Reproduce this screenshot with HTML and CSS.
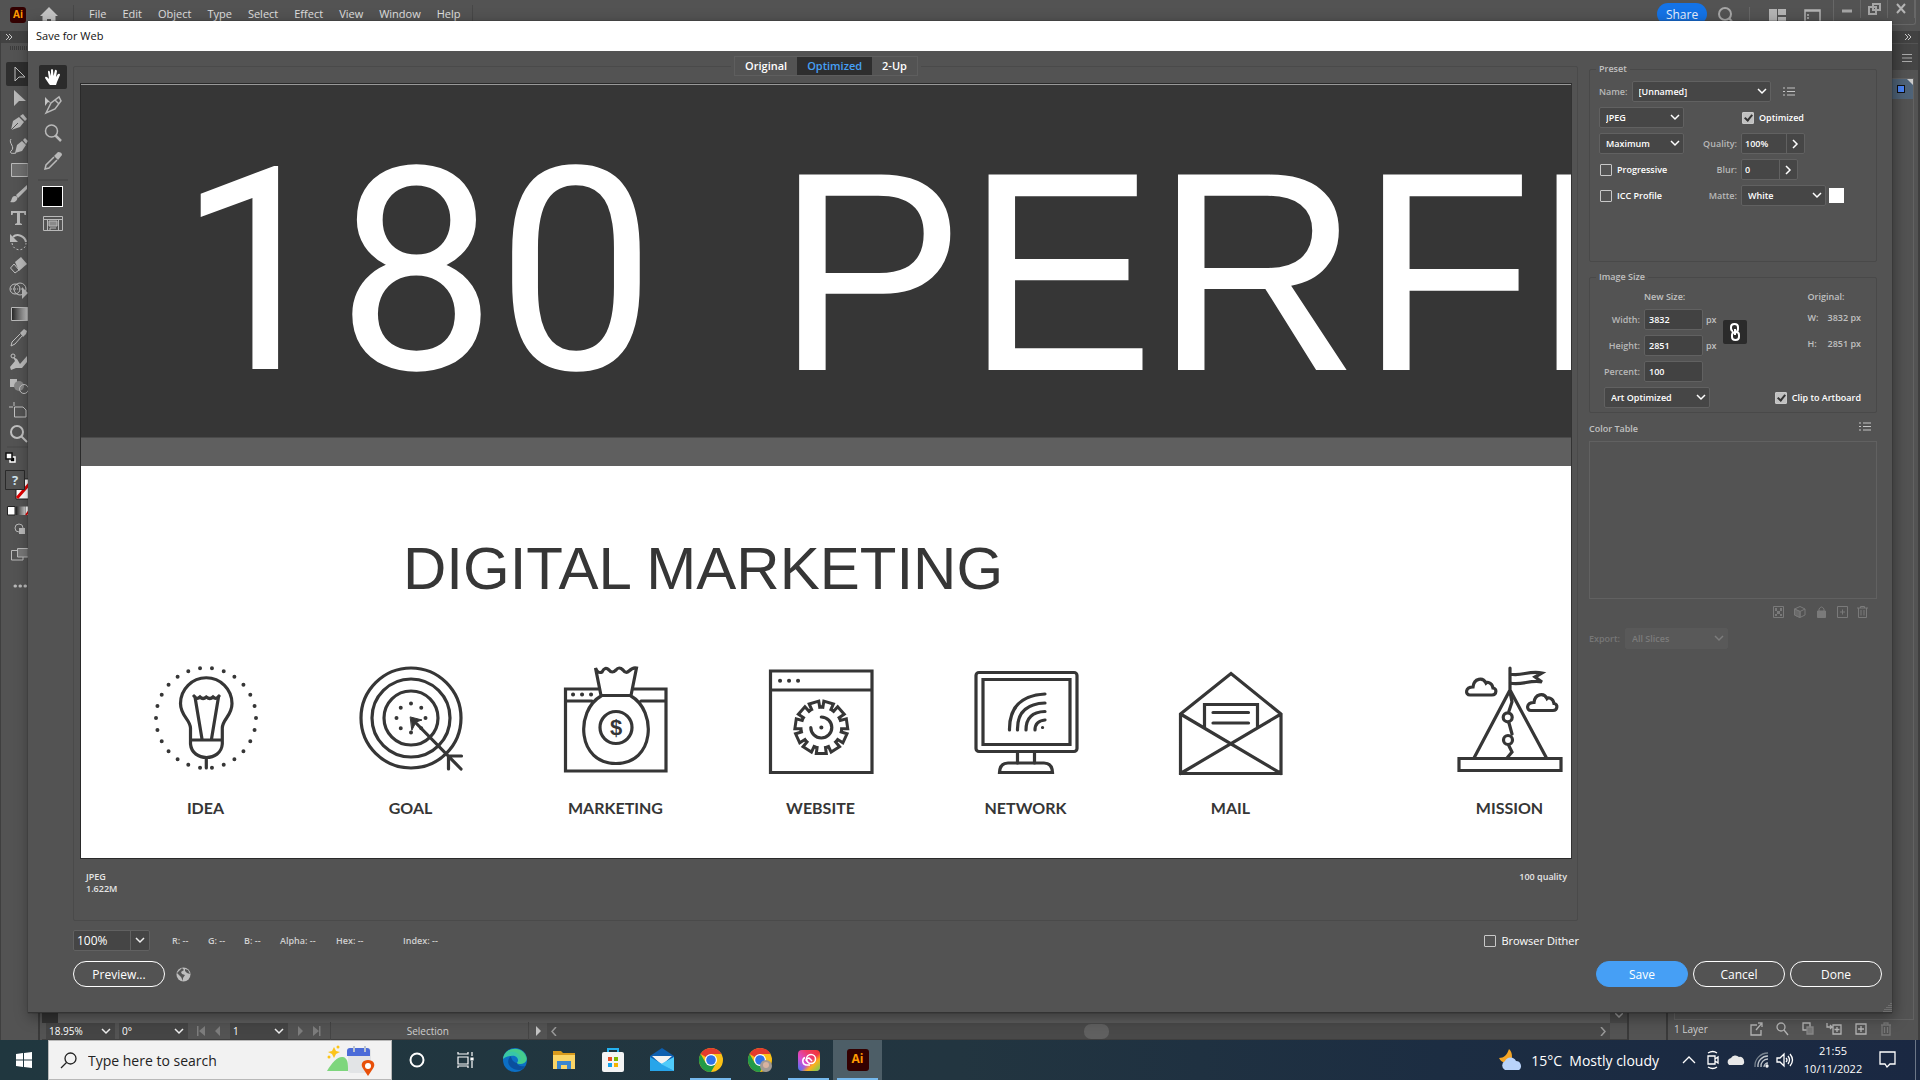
FILE: index.html
```html
<!doctype html>
<html lang="en">
  <head>
    <meta charset="UTF-8" />
    <title>Save for Web</title>
    <link rel="stylesheet" href="styles.css">
  </head>
  <body>
    <header class="menubar">
      <span class="ai-logo">Ai</span>
      <svg class="home" width="18" height="17" viewBox="0 0 18 17"><path d="M9 0L18 9H15.500V17H11V12H7V17H2.500V9H0Z" fill="#c4c4c4"/></svg>
      <nav class="menu">
        <a href="#">File</a><a href="#">Edit</a><a href="#">Object</a><a href="#">Type</a><a href="#">Select</a><a href="#">Effect</a><a href="#">View</a><a href="#">Window</a><a href="#">Help</a>
      </nav>
      <div class="menu-right">
        <button class="share">Share</button>
        <svg width="16" height="18" viewBox="0 0 16 18" fill="none" stroke="#a6a6a6" stroke-width="2"><circle cx="7" cy="7" r="6"/><path d="M11 11L16 17"/></svg>
        <i class="bar"></i>
        <svg width="18" height="14" viewBox="0 0 18 14" fill="#b4b4b4"><path d="M0 0H8V14H0ZM9 0H17V6H9ZM9 8H17V14H9Z"/></svg>
        <svg width="18" height="14" viewBox="0 0 18 14" fill="none" stroke="#b4b4b4" stroke-width="1.500"><path d="M1 14V1H16V14M1 2H16M4 5V7M4 8V10"/></svg>
        <div class="win-buttons">
          <button aria-label="Minimize"><svg width="12" height="12"><path d="M1 8H11" stroke="#a6a6a6" stroke-width="3"/></svg></button>
          <button aria-label="Restore"><svg width="13" height="12" fill="none" stroke="#a6a6a6" stroke-width="2"><path d="M5 1H12V7H5ZM1 4H8V11H1Z"/></svg></button>
          <button aria-label="Close"><svg width="12" height="12"><path d="M2 1L10 10M10 1L2 10" stroke="#b4b4b4" stroke-width="2"/></svg></button>
        </div>
      </div>
    </header>

    <main class="workspace">
      <aside class="toolpanel">
        <div class="panel-head"><svg width="8" height="6" fill="none" stroke="#c8c8c8"><path d="M1 0L4 3L1 6M4 0L7 3L4 6"/></svg></div>
        <div class="grip"></div>
        <ul class="tools">
          <li class="on"><svg viewBox="0 0 20 20"><path class="l" d="M7 3V17L11 13L17 13Z"/></svg></li>
          <li><svg viewBox="0 0 20 20"><path d="M6 2V18L11 13H18Z"/></svg></li>
          <li><svg viewBox="0 0 20 20"><path d="M3 18L5 9L11 5L16 10L12 15ZM12 4L15 2L19 7L17 9Z"/><path class="d" d="M3 18L10 11"/></svg></li>
          <li><svg viewBox="0 0 20 20"><path d="M7 17L9 9L14 5L18 9L14 15ZM15 4L17 2L20 5L18 8Z"/><path class="l" d="M3 3C0 7 8 11 3 15C1 17 4 18 8 17"/></svg></li>
          <li><svg viewBox="0 0 20 20"><path d="M3.500 3.500H20V16.500H3.500Z" fill="#6f6f6f" stroke="#b9b9b9"/></svg></li>
          <li><svg viewBox="0 0 20 20"><path d="M2 18C4 17 3 12 7 12C10 12 10 15 8 17C6 19 4 18 2 18ZM8 11L19 1V5L10 14Z"/></svg></li>
          <li><svg viewBox="0 0 20 20"><path d="M3 3H18V7H16.500L16 5H12V15L14 16V17H7V16L9 15V5H5L4.500 7H3Z"/></svg></li>
          <li><svg viewBox="0 0 20 20"><path class="l" d="M5 5C9 1 17 4 18 10" stroke-width="2"/><path d="M2 2V10H10Z"/><path class="l" d="M4 11C5 20 18 20 18 11" stroke-dasharray="2 2"/></svg></li>
          <li><svg viewBox="0 0 20 20"><path d="M7 6L13 1L19 8L11 15Z"/><path class="l" d="M6 8L2.500 12L7 17L11 14Z"/></svg></li>
          <li><svg viewBox="0 0 20 20"><circle class="l" cx="7" cy="9" r="5"/><circle class="l" cx="12" cy="9" r="6"/><path class="l" d="M3 9H14" stroke-dasharray="1 1"/><path d="M14 7V19L20 13Z"/></svg></li>
          <li><svg viewBox="0 0 20 20"><defs><linearGradient id="g"><stop stop-color="#222"/><stop offset="1" stop-color="#ccc"/></linearGradient></defs><path class="grad" d="M3.500 3.500H20V16.500H3.500Z"/></svg></li>
          <li><svg viewBox="0 0 20 20"><path d="M12 5L16 1L19 3L18 6L15 9Z"/><path class="l" d="M12 6L4 14L3 18L7 16L14 8"/></svg></li>
          <li><svg viewBox="0 0 20 20"><path d="M2 15L7 9L5 5L9 7L12 12L19 4V10L14 16H8L3 18Z"/><circle class="l" cx="5" cy="4" r="2"/></svg></li>
          <li><svg viewBox="0 0 20 20"><path d="M2 3H9V11H2Z"/><circle cx="11" cy="10" r="5" fill="#858585"/><circle class="l" cx="16" cy="13" r="4.500"/></svg></li>
          <li><svg viewBox="0 0 20 20"><path class="l" d="M1 7H5M6 2V6M6.500 7V17H18V10L15 7Z"/></svg></li>
          <li><svg viewBox="0 0 20 20"><circle class="l" cx="9" cy="8" r="6" stroke-width="2"/><path class="l" d="M13 12L19 18" stroke-width="2"/></svg></li>
        </ul>
        <div class="fill-area">
          <svg width="40" height="160" viewBox="0 0 40 160">
            <path d="M6 1H28" stroke="#484848"/>
            <path d="M9 11H14V16H9Z" fill="#000" stroke="#fff" stroke-width="1.500"/><path d="M5 7H11V13H5Z" fill="#fff" stroke="#111" stroke-width="1.500"/>
            <path d="M15 33H40V53H15Z" fill="#fff" stroke="#222"/><path d="M16 52L30 36" stroke="#e00000" stroke-width="3"/>
            <path d="M4.500 24.500H23.500V43.500H4.500Z" fill="#535353" stroke="#2a2a2a"/><text x="11" y="39">?</text>
            <path d="M6.500 60.500H14V69H6.500Z" fill="#fff" stroke="#222"/><path d="M15 60.500H24V69H15Z" fill="url(#g)"/><path d="M24.500 60.500H34V69H24.500Z" fill="#fff"/><path d="M25 69L31 61" stroke="#e00000" stroke-width="2"/>
            <circle cx="18" cy="82" r="4" fill="none" stroke="#b9b9b9"/><path d="M18 82H24V88H18Z" fill="#b9b9b9"/>
            <path d="M10.500 104.500H22V114H10.500Z" fill="none" stroke="#b9b9b9"/><path d="M16.500 102.500H32V111H16.500Z" fill="#777" stroke="#b9b9b9"/>
            <path d="M14 140H14.500M19 140H19.500M24 140H24.500" stroke="#b9b9b9" stroke-width="3" stroke-linecap="round"/>
          </svg>
        </div>
      </aside>

      <section class="document">
        <div class="artboard"><span class="ruler"></span><span class="vscroll"><svg width="8" height="5" fill="none" stroke="#999" stroke-width="1.500"><path d="M0 0L4 4L8 0"/></svg></span></div>
        <footer class="statusbar">
          <label class="combo w-zoom"><input type="text" value="18.95%" aria-label="Zoom level"><svg width="8" height="5"><path d="M0 0L4 4L8 0"/></svg></label>
          <label class="combo w-zoom"><input type="text" value="0°" aria-label="Rotate view"><svg width="8" height="5"><path d="M0 0L4 4L8 0"/></svg></label>
          <svg width="38" height="10" fill="#7d7d7d"><path d="M9 0H10.500V10H9ZM17 0V10L11 5ZM32 0V10L27 5Z"/></svg>
          <label class="combo w-page"><input type="text" value="1" aria-label="Artboard"><svg width="8" height="5"><path d="M0 0L4 4L8 0"/></svg></label>
          <svg width="42" height="10" fill="#7d7d7d"><path d="M10 0V10L15 5ZM25 0V10L31 5ZM31 0H32.500V10H31Z"/></svg>
          <span class="status-text">Selection</span>
          <svg width="18" height="10" fill="#c4c4c4"><path d="M7 0V10L12 5Z"/></svg>
          <div class="hscroll">
            <svg width="6" height="9"><path d="M5 0L1 4.500L5 9"/></svg>
            <span class="thumb"></span>
            <svg width="6" height="9"><path d="M1 0L5 4.500L1 9"/></svg>
          </div>
          <span class="corner"></span>
        </footer>
      </section>
      <div class="dock"></div>
      <aside class="layers">
        <div class="panel-head right"><svg width="8" height="6" fill="none" stroke="#c8c8c8"><path d="M1 0L4 3L1 6M4 0L7 3L4 6"/></svg></div>
        <div class="layer-tabs"><svg width="10" height="8" stroke="#aaa"><path d="M0 .5H10M0 4H10M0 7.500H10"/></svg></div>
        <div class="layer-list"><div class="layer-row"><i></i><svg width="6" height="6"><path d="M0 0H6V6Z" fill="#ccc"/></svg></div></div>
        <div class="layer-foot">
          <span>1 Layer</span>
          <svg width="150" height="14" fill="none" stroke="#b4b4b4" stroke-width="1.300">
            <path d="M7 3H1V13H11V8M6 8L12 1M8 1H12V5"/>
            <circle cx="31" cy="5" r="4"/><path d="M34 8L38 13"/>
            <path d="M53 1H60V8H53Z"/><path d="M57 5H63V12H57Z" fill="#777" stroke="#888"/>
            <path d="M77 1V5H82M80 3L82 5L80 7M83 3H91V12H83ZM87 5V10M84.500 7.500H89.500"/>
            <path d="M106 2H116V12H106ZM111 4V10M108 7H114"/>
            <path d="M131 3H141M134 3V1H138V3M132 3V13H140V3M134.500 5V11M137.500 5V11" stroke="#777"/>
          </svg>
        </div>
      </aside>
    </main>

    <!-- Windows taskbar -->
    <footer class="taskbar">
      <button class="start" aria-label="Start"><svg width="16" height="16" viewBox="0 0 16 16" fill="#fff"><path d="M0 2L7 1V7.500H0ZM8 1L16 0V7.500H8ZM0 8.500H7V15L0 14ZM8 8.500H16V16L8 15Z"/></svg></button>
      <label class="search">
        <svg width="17" height="17" viewBox="0 0 17 17" fill="none" stroke="#222" stroke-width="1.300"><circle cx="10.500" cy="6.500" r="5.500"/><path d="M6.500 10.500L1 16"/></svg>
        <input type="text" placeholder="Type here to search">
        <svg width="50" height="32" viewBox="0 0 50 32">
          <path d="M7 3L9 7L13 8L9 10L7 14L5 10L1 8L5 7Z" fill="#fcc419"/><circle cx="11" cy="3" r="1.500" fill="#fcc419"/><circle cx="2" cy="13" r="1.500" fill="#fcc419"/>
          <rect x="21" y="4" width="23" height="25" rx="3" fill="#e2e4e6"/><path d="M20 12V7Q20 4 23 4H40Q43 4 43 7V12Z" fill="#4a6bd8"/><path d="M27 2V8M38 2V8" stroke="#b9c2cf" stroke-width="2"/>
          <path d="M0 27C5 18 11 12 16 13C21 14 21 20 21 27Z" fill="#7ed67d"/>
          <path d="M41 32L37 26C32 20 36 16 41 16C46 16 50 20 45 26Z" fill="#e8500a"/><circle cx="41" cy="22" r="3" fill="#fff"/>
        </svg>
      </label>
      <div class="apps">
        <a href="#"><svg viewBox="0 0 26 26"><circle cx="13" cy="13" r="6.500" fill="none" stroke="#fff" stroke-width="2"/></svg></a>
        <a href="#"><svg viewBox="0 0 26 26" fill="none" stroke="#fff" stroke-width="1.200"><path d="M5 5V7H15V5M5 10H15V17H5ZM5 21V19H15V21M19 5V9M19 14V21"/><path d="M18 11H20V13H18Z" fill="#fff"/></svg></a>
        <a href="#"><svg viewBox="0 0 26 26"><circle cx="13" cy="13" r="12" fill="#0c6fc4"/><path d="M1 12C2 0 20-2 24 10C26 17 18 18 15 16C18 12 14 8 9 9C5 9 2 11 1 12Z" fill="#38c6a8"/><path d="M9 9C3 14 7 23 17 23C20 23 22 21 23 19C19 20 15 18 15 16C12 16 9 12 9 9Z" fill="#0a4f9e"/><path d="M2 9C6 3 14 3 18 9C20 13 17 15 15 16C17 18 24 17 25 12C24 1 8-3 2 9Z" fill="#4cd07c" opacity=".6"/></svg></a>
        <a href="#"><svg viewBox="0 0 26 26"><path d="M2 4H10L12 6H24V22H2Z" fill="#d99a1c"/><path d="M2 8H24V22H2Z" fill="#fbd566"/><path d="M6 22V14H20V22H16V18H10V22Z" fill="#3a86d0"/></svg></a>
        <a href="#"><svg viewBox="0 0 26 26"><path d="M8 6V2H18V6" fill="none" stroke="#25b2f0" stroke-width="2"/><rect x="2" y="5" width="22" height="20" rx="2" fill="#f4f4f4"/><path d="M8 10H12V14H8Z" fill="#e94f27"/><path d="M14 10H18V14H14Z" fill="#7fba00"/><path d="M8 16H12V20H8Z" fill="#13a3ef"/><path d="M14 16H18V20H14Z" fill="#f7b500"/></svg></a>
        <a href="#"><svg viewBox="0 0 26 26"><path d="M1 9L13 1L25 9V24H1Z" fill="#0d5fb0"/><path d="M3 9H23L13 18Z" fill="#f2f2f2"/><path d="M1 10L25 24H1Z" fill="#27a5ea"/><path d="M25 10L12 17L25 24Z" fill="#4fcbfa"/></svg></a>
        <a href="#" class="run"><svg viewBox="0 0 26 26"><circle cx="13" cy="13" r="12" fill="#fbc116"/><path d="M13 13L2.600 7A12 12 0 0 1 23.400 7H13Z" fill="#e33b2e"/><path d="M2.600 7A12 12 0 0 0 13 25L18.200 16L13 13L7.800 16Z" fill="#229a48"/><circle cx="13" cy="13" r="6" fill="#fff"/><circle cx="13" cy="13" r="4.800" fill="#2f72e8"/></svg></a>
        <a href="#"><svg viewBox="0 0 26 26"><circle cx="13" cy="13" r="12" fill="#fbc116"/><path d="M13 13L2.600 7A12 12 0 0 1 23.400 7H13Z" fill="#e33b2e"/><path d="M2.600 7A12 12 0 0 0 13 25L18.200 16L13 13L7.800 16Z" fill="#229a48"/><circle cx="13" cy="13" r="6" fill="#fff"/><circle cx="13" cy="13" r="4.800" fill="#2f72e8"/><circle cx="19" cy="19" r="6" fill="#a29a94"/><circle cx="19" cy="18" r="3" fill="#d9b3a0"/></svg></a>
        <a href="#" class="run"><svg viewBox="0 0 26 26"><defs><linearGradient id="cc" x1="1" x2="0" y2="1"><stop stop-color="#f0362b"/><stop offset=".35" stop-color="#ee3a6a"/><stop offset=".65" stop-color="#d94bd0"/><stop offset="1" stop-color="#3b7cf5"/></linearGradient><linearGradient id="cc2" x1="0" x2="1" y2="1"><stop offset=".55" stop-color="#fa0" stop-opacity="0"/><stop offset=".7" stop-color="#ffb01c"/><stop offset="1" stop-color="#5fd35a"/></linearGradient></defs><rect x="2" y="3" width="22" height="21" rx="4" fill="url(#cc)"/><rect x="2" y="3" width="22" height="21" rx="4" fill="url(#cc2)"/><circle cx="15" cy="12" r="4.500" fill="none" stroke="#fff" stroke-width="1.500"/><path d="M14 18H10A4 4 0 0 1 9 10.500M12 15L10 13A3 3 0 0 1 13 11L16 14" fill="none" stroke="#fff" stroke-width="1.500"/></svg></a>
        <a href="#" class="run active"><span class="ai-logo big">Ai</span></a>
      </div>
      <div class="tray">
        <svg width="24" height="22" viewBox="0 0 24 22"><path d="M10 0C8 6 5 9 0 9C3 16 13 14 13 8C13 4 12 2 10 0Z" fill="#f5a524"/><path d="M6 21A5 5 0 0 1 6 12A6 6 0 0 1 17 12A5 5 0 0 1 20 21Z" fill="#b9d3fa"/></svg>
        <span class="weather">15°C&nbsp; Mostly cloudy</span>
        <svg width="112" height="20" viewBox="0 0 112 20" fill="none" stroke="#fff" stroke-width="1.300">
          <path d="M1 13L7 7L13 13"/>
          <path d="M26 6H33V14H26ZM33 9L36 7V13L33 11M26 3Q31 0 35 3M26 17Q31 20 35 17"/>
          <path d="M47 15A4 4 0 0 1 49 8A5 5 0 0 1 57 7A4 4 0 0 1 62 11A3 3 0 0 1 60 15Z" fill="#e8e8e8" stroke="none"/>
          <path d="M76 17A10 10 0 0 1 86 6M79 17A7 7 0 0 1 86 9M82 17A4 4 0 0 1 86 13" stroke="#c0c6cc"/><path d="M73 17A13 13 0 0 1 86 3" stroke="#78838f"/><circle cx="85" cy="16" r="1"/>
          <path d="M95 8H98L102 4V16L98 12H95ZM104 8Q106 10 104 12M106 6Q109 10 106 14M108 4Q113 10 108 16"/>
        </svg>
        <div class="clock"><span>21:55</span><span>10/11/2022</span></div>
        <svg width="17" height="18" fill="none" stroke="#fff" stroke-width="1.300"><path d="M1 1H16V13H11L8 16L6 13H1Z"/></svg>
        <i class="peek"></i>
      </div>
    </footer>

    <!-- Save for Web window -->
    <section class="dialog">
      <h1 class="dialog-title">Save for Web</h1>
      <div class="dialog-main">
        <div class="dialog-tools">
          <button class="on" aria-label="Hand"><svg viewBox="0 0 20 20" fill="#fff"><path d="M6 17L2 11Q2 9 4 10L6 12L5 5Q5 3 6.500 4L8 9L8 3Q9 1 10 3L10.500 9L12 3Q13 2 14 4L13 10L15 7Q17 6 17 8L14 15L13 18H7Z"/></svg></button>
          <button aria-label="Slice select"><svg viewBox="0 0 20 20"><path d="M2 2L8 8L5 7L2 11Z" fill="#c4c4c4"/><path d="M3 18L8 8L16 2L18 6L12 14ZM12 5L16 9" fill="none" stroke="#b9b9b9" stroke-width="1.500"/></svg></button>
          <button aria-label="Zoom"><svg viewBox="0 0 20 20" fill="none" stroke="#b9b9b9"><circle cx="8.500" cy="8" r="6" stroke-width="1.500"/><path d="M12.500 12.500L18 18" stroke-width="2.500"/></svg></button>
          <button aria-label="Eyedropper"><svg viewBox="0 0 20 20"><path d="M11 5L15 1Q19 1 19 4L15 9Z" fill="#b9b9b9"/><path d="M11 6L3 14L2 18L6 17L14 9" fill="none" stroke="#b9b9b9" stroke-width="1.500"/></svg></button>
          <hr>
          <button class="swatch" aria-label="Eyedropper color"></button>
          <button aria-label="Slices visibility"><svg viewBox="0 0 20 20" fill="none" stroke="#b9b9b9"><path d="M.5 3.500H19.500V17.500H.5ZM.5 6.500H19.500M4.500 7V17M15.500 7V17"/><path d="M6 8H14V13H6Z" fill="#8a8a8a"/><path d="M7 17V15H13"/></svg></button>
        </div>

        <div class="preview">
          <div class="tabs">
            <button>Original</button><button class="current">Optimized</button><button>2-Up</button>
          </div>
          <div class="canvas">
            <div class="hero"><span class="num">180</span><span>PERFE</span></div>
            <div class="strip"></div>
            <div class="sheet">
              <h2>DIGITAL MARKETING</h2>
              <div class="icons">
                <figure>
                  <svg viewBox="0 0 110 116">
                    <circle cx="55" cy="58" r="50" pathLength="26" stroke-dasharray="0 1" stroke-width="4"/>
                    <path d="M39.500 80V68C39 59 29.500 56 29.500 43.500A25.600 25.600 0 0 1 81 43.500C81 56 71.500 59 71.300 68V80ZM39.500 80V84C41 102 70 102 71.300 84V80M55.300 98V108M51 79L44 37M60.500 79L67.500 37M43 36Q46 40 49 37Q52 40 55.300 37Q59 40 62 37Q65 40 68 36"/>
                  </svg>
                  <figcaption>IDEA</figcaption>
                </figure>
                <figure>
                  <svg viewBox="0 0 110 116">
                    <circle cx="55" cy="58" r="50"/><circle cx="55" cy="58" r="39"/><circle cx="55" cy="58" r="27"/>
                    <circle cx="55" cy="58" r="14.500" pathLength="8" stroke-dasharray="0 1" stroke-width="4"/>
                    <path d="M57 60L105 109M92.500 109V96H105.500"/><path class="solid" d="M54.500 57L66 60L60 62L56 70Z"/>
                  </svg>
                  <figcaption>GOAL</figcaption>
                </figure>
                <figure>
                  <svg viewBox="0 0 110 116">
                    <path d="M38 29H4.500V111H105V29H72M4.500 41H31M80 41H105M40 35.500L34.500 8Q37 14 41 12Q44 6 48 10Q51 14 55 10Q58 6 62 10Q65 14 68 11Q72 7 75.500 8L70 35.500ZM40 36C14 51 16 103.500 55 103.500C94 103.500 96 51 70 36"/>
                    <circle cx="55" cy="67.500" r="16"/>
                    <path d="M12 34.500H12.100M21 34.500H21.100M30 34.500H30.100" stroke-width="4"/>
                    <text x="55" y="75">$</text>
                  </svg>
                  <figcaption>MARKETING</figcaption>
                </figure>
                <figure>
                  <svg viewBox="0 0 110 116">
                    <path d="M4.500 11H106V112.500H4.500ZM4.500 30H106"/>
                    <path d="M14 20.700H14.100M23 20.700H23.100M32 20.700H32.100M55.300 67.500H55.400" stroke-width="4"/>
                    <defs><path id="tooth" d="M-5.770-19.660L-4.200-19.900L-5-26H5L4.200-19.900L5.770-19.660"/></defs>
                    <g class="gear" transform="translate(55.300 67.500) rotate(180)">
                      <use href="#tooth"/><use href="#tooth" transform="rotate(32.730)"/><use href="#tooth" transform="rotate(65.450)"/><use href="#tooth" transform="rotate(98.180)"/><use href="#tooth" transform="rotate(130.910)"/><use href="#tooth" transform="rotate(163.640)"/><use href="#tooth" transform="rotate(196.360)"/><use href="#tooth" transform="rotate(229.090)"/><use href="#tooth" transform="rotate(261.820)"/><use href="#tooth" transform="rotate(294.550)"/><use href="#tooth" transform="rotate(327.270)"/>
                    </g>
                    <path d="M55.300 57A10.500 10.500 0 1 1 44.800 67.500"/>
                  </svg>
                  <figcaption>WEBSITE</figcaption>
                </figure>
                <figure>
                  <svg viewBox="0 0 110 116">
                    <rect x="5" y="12.500" width="101" height="79" rx="3"/><path d="M12 19.500H99V84.500H12ZM46.500 92V103M63.500 92V103"/>
                    <path d="M28.500 112.500H81.500Q81 103 73 103H37Q29 103 28.500 112.500Z"/>
                    <path d="M74 34Q38 36 38.500 70M74 43Q46 44 46.500 70M74 51.500Q55 52 55 70M74 60Q64 61 64 70M71.500 67.500H71.600"/>
                  </svg>
                  <figcaption>NETWORK</figcaption>
                </figure>
                <figure>
                  <svg viewBox="0 0 110 116">
                    <path d="M4.500 54L55 13.500L105 54V113.500H4.500ZM4.500 54L105 113.500M105 54L4.500 113.500M28.500 67V44.500H81.500V67M37 52.500H72.500M37 63H72.500"/>
                  </svg>
                  <figcaption>MAIL</figcaption>
                </figure>
                <figure class="far">
                  <svg viewBox="0 0 110 116">
                    <path d="M4 98.500H106V110.500H4ZM19 98L55 30L91.500 98M55 8V30M55 14C66 17 74 10 87 13L80 17L87 22C76 19 66 26 55 23M55 32L57 42L54 51M54 63L57 74M54 86L57 92L52 98"/>
                    <circle cx="52.700" cy="57.300" r="4.500"/><circle cx="53" cy="80" r="4.500"/>
                    <path d="M15 35H37C42 35 42 28 38 28C37 22 32 22 31 23C28 17 19 18 18 27C10 27 10 35 15 35Z"/>
                    <path d="M76 50.500H98C103 50.500 103 43.500 99 43.500C98 37.500 93 37.500 92 38.500C89 32.500 80 33.500 79 42.500C71 42.500 71 50.500 76 50.500Z"/>
                  </svg>
                  <figcaption>MISSION</figcaption>
                </figure>
              </div>
            </div>
          </div>
          <div class="preview-info"><span>JPEG<br>1.622M</span><span>100 quality</span></div>
        </div>

        <div class="settings">
          <fieldset class="preset">
            <legend>Preset</legend>
            <div class="row">
              <label for="name">Name:</label>
              <span class="select w-name"><select id="name"><option>[Unnamed]</option></select><svg width="8" height="5"><path d="M0 0L4 4L8 0"/></svg></span>
              <svg class="list-icon" width="12" height="9" stroke="#c4c4c4"><path d="M0 1H2M4 1H12M0 4.500H2M4 4.500H12M0 8H2M4 8H12"/></svg>
            </div>
            <div class="row">
              <span class="select w-half"><select aria-label="Format"><option>JPEG</option></select><svg width="8" height="5"><path d="M0 0L4 4L8 0"/></svg></span>
              <span class="lab"></span>
              <label class="check"><input type="checkbox" checked>Optimized</label>
            </div>
            <div class="row">
              <span class="select w-half"><select aria-label="Compression"><option>Maximum</option></select><svg width="8" height="5"><path d="M0 0L4 4L8 0"/></svg></span>
              <label class="lab" for="quality">Quality:</label>
              <span class="spin"><input class="w-45" id="quality" type="text" value="100%"><button aria-label="Quality slider"><svg width="5" height="8"><path d="M0 0L4 4L0 8"/></svg></button></span>
            </div>
            <div class="row">
              <label class="check w-half"><input type="checkbox">Progressive</label>
              <label class="lab" for="blur">Blur:</label>
              <span class="spin"><input class="w-38" id="blur" type="text" value="0"><button aria-label="Blur slider"><svg width="5" height="8"><path d="M0 0L4 4L0 8"/></svg></button></span>
            </div>
            <div class="row">
              <label class="check w-half"><input type="checkbox">ICC Profile</label>
              <label class="lab" for="matte">Matte:</label>
              <span class="select w-half"><select id="matte"><option>White</option></select><svg width="8" height="5"><path d="M0 0L4 4L8 0"/></svg></span>
              <button class="matte-color" aria-label="Matte color"></button>
            </div>
          </fieldset>

          <fieldset class="image-size">
            <legend>Image Size</legend>
            <div class="dims">
              <div class="dim-fields">
                <div class="dim-head">New Size:</div>
                <div class="row"><label for="w">Width:</label><input id="w" type="text" value="3832">px</div>
                <div class="row"><label for="h">Height:</label><input id="h" type="text" value="2851">px</div>
                <div class="row"><label for="p">Percent:</label><input id="p" type="text" value="100"></div>
              </div>
              <button class="link" aria-label="Constrain proportions"><svg width="10" height="18" viewBox="0 0 10 18" fill="none" stroke="#fff" stroke-width="2"><path d="M3 8Q1 8 1 5V4Q1 1 4.500 1Q8 1 8 4V6Q8 9 5 9M6 9Q9 9 9 12V14Q9 17 5.500 17Q2 17 2 14V12Q2 10 4 9M5 6V12"/></svg></button>
              <div class="orig">
                <div>Original:</div>
                <div><span>W:</span>3832 px</div>
                <div><span>H:</span>2851 px</div>
              </div>
            </div>
            <div class="row resample">
              <span class="select w-art"><select aria-label="Resampling"><option>Art Optimized</option></select><svg width="8" height="5"><path d="M0 0L4 4L8 0"/></svg></span>
              <label class="check"><input type="checkbox" checked>Clip to Artboard</label>
            </div>
          </fieldset>

          <div class="table-head"><span>Color Table</span><svg width="12" height="9" stroke="#c4c4c4"><path d="M0 1H2M4 1H12M0 4.500H2M4 4.500H12M0 8H2M4 8H12"/></svg></div>
          <div class="color-table"></div>
          <svg class="table-tools" width="96" height="12" viewBox="0 0 96 12" fill="none" stroke="#7a7a7a">
            <path d="M.5.5H10.500V11.500H.5Z"/><path d="M2 2H4V5H2ZM7 2H9V5H7ZM4 5H7V8H4ZM2 8H4V10H2ZM7 8H9V10H7Z" fill="#7a7a7a" stroke="none"/>
            <path d="M27 .5L32 3V9L27 11.500L21.500 9V3ZM21.500 3L27 5.500L32 3M27 5.500V11.500"/><path d="M21.500 3L27 5.500V11.500L21.500 9Z" fill="#6a6a6a"/>
            <path d="M46 5V3Q48.500-1 51 3V5"/><path d="M44.500 5H52.500V11.500H44.500Z" fill="#7a7a7a"/>
            <path d="M64.500.5H74.500V11.500H64.500ZM69.500 3.500V8.500M67 6H72"/>
            <path d="M84 2H95M87.500 2V.5H91.500V2M85.500 2V11.500H93.500V2M88 4V9.500M91 4V9.500"/>
          </svg>
          <div class="export">
            <label for="export">Export:</label>
            <span class="select w-export off"><select id="export" disabled><option>All Slices</option></select><svg width="8" height="5"><path d="M0 0L4 4L8 0"/></svg></span>
          </div>
        </div>
      </div>

      <div class="info-row">
        <label class="combo zoom"><input type="text" value="100%" aria-label="Zoom"><svg width="8" height="5"><path d="M0 0L4 4L8 0"/></svg></label>
        <div class="readout"><span>R: --</span><span>G: --</span><span>B: --</span><span class="wide">Alpha: --</span><span class="wider">Hex: --</span><span>Index: --</span></div>
        <label class="check dither"><input type="checkbox">Browser Dither</label>
      </div>
      <div class="button-row">
        <button class="pill">Preview...</button>
        <svg class="globe" width="15" height="15" viewBox="0 0 15 15"><circle cx="7.500" cy="7.500" r="7" fill="#bdbdbd"/><path d="M6 1L8 3L5 5L6 7L9 8L7 11V14L5 10L3 8L1 6L3 4ZM9 2L12 3L14 7L11 6L9 4Z" fill="#555"/></svg>
        <span class="spacer"></span>
        <button class="pill save">Save</button>
        <button class="pill">Cancel</button>
        <button class="pill">Done</button>
      </div>
      <svg class="resize" width="9" height="9"><path d="M8 0V9M6 2V9M4 4V9M2 6V9M0 8V9" stroke="#8a8a8a" stroke-dasharray="1 1"/></svg>
    </section>
  </body>
</html>
```
FILE: styles.css
```css
* {
  box-sizing: border-box;
}
body {
  margin: 0;
  height: 100vh;
  display: flex;
  flex-direction: column;
  position: relative;
  overflow: hidden;
  background-color: #535353;
  color: #d0d0d0;
  font-family: 'Open Sans', 'Noto Sans', sans-serif;
  font-size: 12px;
}
button,
input,
select {
  font: inherit;
  color: inherit;
  margin: 0;
  padding: 0;
  border: none;
  background: none;
  border-radius: 0;
  min-width: 0;
}
svg {
  display: block;
  flex: none;
}
a {
  color: inherit;
  text-decoration: none;
}

/* menu bar */
.menubar {
  height: 31px;
  display: flex;
  align-items: flex-start;
  padding: 7px 4px 0 10px;
}
.ai-logo {
  width: 16px;
  height: 16px;
  border-radius: 3px;
  background-color: #330000;
  color: #ff9a00;
  font-size: 10px;
  font-weight: bold;
  line-height: 15px;
  text-align: center;
}
.home {
  margin-left: 14px;
}
.menu {
  display: flex;
  gap: 16px;
  margin: -2px 0 0 15px;
  padding: 0 11px 0 15px;
  border-left: 1px solid #474747;
  border-right: 1px solid #474747;
  font-size: 11px;
  line-height: 18px;
  color: #e0e0e0;
}
.menu-right {
  margin-left: auto;
  display: flex;
  gap: 11px;
}
.share {
  width: 50px;
  height: 22px;
  margin-top: -4px;
  border-radius: 11px;
  background-color: #1473e6;
  color: #e8f1ff;
  font-size: 12px;
  line-height: 24px;
}
.bar {
  width: 1px;
  height: 16px;
  margin: 0 8px 0 4px;
  background-color: #666;
}
.menu-right > svg {
  margin-top: 2px;
}
.menu-right > svg:first-of-type {
  margin-top: 0;
}
.menu-right > .bar + svg {
  margin-right: 6px;
}
.win-buttons {
  display: flex;
  margin-top: -7px;
  border: 1px solid #676767;
  border-top: none;
  border-radius: 0 0 3px 3px;
}
.win-buttons button {
  width: 27px;
  height: 18px;
  display: flex;
  align-items: center;
  justify-content: center;
  border-right: 1px solid #676767;
}

/* background workspace */
.workspace {
  flex: 1;
  display: flex;
  min-height: 0;
}
.toolpanel {
  width: 40px;
  border-right: 2px solid #3a3a3a;
  border-left: 1px solid #3f3f3f;
  overflow: hidden;
}
.panel-head {
  height: 12px;
  padding: 3px 0 0 4px;
  background-color: #424242;
}
.panel-head.right {
  display: flex;
  justify-content: flex-end;
  padding-right: 6px;
}
.grip {
  width: 26px;
  height: 4px;
  margin: 3px 0 12px 9px;
  background: repeating-linear-gradient(90deg, #3c3c3c 0 1px, #535353 1px 2px);
}
.tools {
  list-style: none;
  margin: 0;
  padding: 0 0 0 5px;
}
.tools li {
  height: 24px;
  padding: 2px;
}
.tools .on {
  background-color: #2e2e2e;
  border-radius: 2px;
}
.tools svg {
  width: 20px;
  height: 20px;
  fill: #b9b9b9;
}
.tools .l {
  fill: none;
  stroke: #c0c0c0;
}
.tools .d {
  stroke: #535353;
}
.tools .grad {
  fill: url(#g);
  stroke: #b9b9b9;
}
.fill-area text {
  fill: #cfe3ee;
  font-size: 13px;
  font-weight: bold;
}
.document {
  flex: 1;
  display: flex;
  flex-direction: column;
  min-width: 0;
  padding-left: 2px;
}
.artboard {
  flex: 1;
  display: flex;
  justify-content: space-between;
  background-color: #5c5c5c;
}
.ruler {
  width: 16px;
  background-color: #333;
}
.vscroll {
  width: 17px;
  display: flex;
  align-items: flex-end;
  justify-content: center;
  padding-bottom: 5px;
  background-color: #494949;
}
.statusbar {
  height: 17px;
  display: flex;
  align-items: center;
  border-bottom: 1px solid #3f3f3f;
  font-size: 10px;
  line-height: 18px;
}
.statusbar .combo {
  height: 16px;
  margin-left: 4px;
}
.combo {
  display: flex;
  align-items: center;
  color: #fff;
  background-color: #454545;
}
.combo input {
  flex: 1;
  width: 100%;
  padding-left: 3px;
}
.combo svg {
  width: 8px;
  margin: 0 5px;
  fill: none;
  stroke: #eee;
  stroke-width: 1.5;
  overflow: visible;
}
.w-zoom {
  width: 69px;
}
.w-page {
  width: 58px;
}
.status-text {
  width: 199px;
  padding-right: 79px;
  text-align: right;
  border-left: 1px solid #454545;
  border-right: 1px solid #454545;
}
.hscroll {
  flex: 1;
  display: flex;
  align-items: center;
  justify-content: space-between;
  height: 16px;
  padding: 0 4px;
  background-color: #494949;
}
.hscroll svg {
  fill: none;
  stroke: #999;
  stroke-width: 1.5;
}
.thumb {
  width: 25px;
  height: 15px;
  margin-left: 36px;
  border-radius: 7px;
  background-color: #606060;
}
.corner {
  width: 17px;
}
.dock {
  width: 41px;
  border-left: 2px solid #3a3a3a;
  border-right: 2px solid #3a3a3a;
}
.layers {
  width: 252px;
  display: flex;
  flex-direction: column;
  border-right: 2px solid #3f3f3f;
}
.layer-tabs {
  height: 26px;
  display: flex;
  justify-content: flex-end;
  padding: 10px 6px 0;
  margin-top: 1px;
  background-color: #454545;
}
.layer-list {
  flex: 1;
  margin: 8px 4px 0 6px;
  border: 1px solid #626262;
}
.layer-row {
  height: 20px;
  display: flex;
  justify-content: flex-end;
  background-color: #4f6378;
}
.layer-row i {
  width: 6px;
  height: 6px;
  margin: 7px 3px 0 0;
  background-color: #4b84f5;
  outline: 1px solid #111;
}
.layer-foot {
  height: 20px;
  display: flex;
  justify-content: space-between;
  align-items: center;
  padding: 0 18px 2px 6px;
  font-size: 10px;
}

/* taskbar */
.taskbar {
  height: 40px;
  display: flex;
  align-items: center;
  background: linear-gradient(90deg, #20373f 0%, #223540 50%, #1c2d42 75%, #1a2842 100%);
  color: #fff;
}
.start {
  width: 48px;
  padding-left: 16px;
}
.search {
  width: 344px;
  height: 40px;
  display: flex;
  align-items: center;
  padding: 0 14px 0 11px;
  background-color: #f2f2f2;
  border: 1px solid #b8b8b8;
}
.search input {
  flex: 1;
  padding-left: 11px;
  font-size: 14px;
  color: #222;
}
.search input::placeholder {
  color: #222;
}
.apps {
  display: flex;
}
.apps a {
  width: 49px;
  height: 40px;
  display: flex;
  align-items: center;
  justify-content: center;
  border: 0 solid transparent;
  border-width: 0 4px;
}
.apps a > svg {
  width: 26px;
  height: 26px;
}
.apps .run {
  box-shadow: inset 0 -2px #76b9ed;
}
.apps .active {
  background-color: #4d5e67;
}
.ai-logo.big {
  width: 22px;
  height: 22px;
  font-size: 12px;
  line-height: 20px;
}
.tray {
  margin-left: auto;
  display: flex;
  align-items: center;
}
.weather {
  margin: 0 23px 0 8px;
  font-size: 14px;
}
.clock {
  width: 60px;
  margin: 0 16px 0 9px;
  text-align: center;
  font-size: 11px;
  line-height: 18px;
}
.clock span {
  display: block;
}
.peek {
  width: 1px;
  height: 40px;
  margin: 0 4px 0 19px;
  background-color: #6c7787;
}

/* dialog window */
.dialog {
  position: absolute;
  top: 21px;
  left: 28px;
  right: 28px;
  bottom: 67px;
  display: flex;
  flex-direction: column;
  background-color: #535353;
  border-bottom: 1px solid #333;
  box-shadow: 0 0 1px #222, 2px 4px 14px rgba(0, 0, 0, 0.4);
}
.dialog-title {
  height: 30px;
  margin: 0;
  padding-left: 8px;
  background-color: #fff;
  color: #111;
  font-size: 11px;
  font-weight: normal;
  line-height: 30px;
}
.dialog-main {
  flex: 1;
  display: flex;
  min-height: 0;
}
.dialog-tools {
  width: 45px;
  padding: 14px 6px 0 10px;
  display: flex;
  flex-direction: column;
  gap: 4px;
  align-items: center;
}
.dialog-tools button {
  width: 28px;
  height: 24px;
  display: flex;
  align-items: center;
  justify-content: center;
  border-radius: 2px;
}
.dialog-tools button.on {
  background-color: #2b2b2b;
}
.dialog-tools svg {
  width: 20px;
  height: 20px;
}
.dialog-tools hr {
  width: 30px;
  margin: 2px 0 1px;
  border: none;
  border-top: 2px solid #4a4a4a;
}
.dialog-tools button.swatch {
  width: 21px;
  height: 21px;
  border: 1px solid #fff;
  border-radius: 0;
  background-color: #000;
}
.preview {
  flex: 1;
  min-width: 0;
  display: flex;
  flex-direction: column;
  margin-top: 15px;
  padding: 0 5px 0 6px;
  border: 1px solid #4a4a4a;
  border-radius: 2px;
}
.tabs {
  display: flex;
  align-self: center;
  height: 20px;
  margin: -11px 0 7px;
  border: 1px solid #5e5e5e;
  background-color: #535353;
  outline: 3px solid #535353;
  color: #fff;
}
.tabs button {
  padding: 0 10px;
  font-size: 11px;
  font-weight: 600;
  line-height: 16px;
}
.tabs .current {
  background-color: #2e2e2e;
  color: #46a0f5;
}
.canvas {
  flex: 1;
  display: flex;
  flex-direction: column;
  overflow: hidden;
  border: 1px solid #2a2a2a;
  border-right-color: #333;
  background-color: #fff;
}
.hero {
  height: 353px;
  display: flex;
  gap: 120px;
  padding-left: 96px;
  border-top: 1px solid #999;
  background-color: #363636;
  color: #fff;
  font-family: 'Liberation Sans', Arial, sans-serif;
  font-size: 284px;
  line-height: 374px;
}
.hero .num {
  font-family: Roboto, sans-serif;
}
.strip {
  height: 29px;
  border-top: 1px solid #4a4a4a;
  background-color: #5f5f5f;
}
.sheet {
  color: #363636;
}
.sheet h2 {
  margin: 0;
  padding: 64px 0 0 322px;
  font-family: 'Liberation Sans', Arial, sans-serif;
  font-size: 60px;
  font-weight: normal;
  line-height: 78px;
}
.icons {
  display: flex;
  padding: 52px 0 0 22px;
}
.icons figure {
  width: 205px;
  flex: none;
  margin: 0;
  display: flex;
  flex-direction: column;
  align-items: center;
}
.icons .far {
  margin-left: 74px;
}
.icons svg {
  width: 110px;
  height: 116px;
  fill: none;
  stroke: #363636;
  stroke-width: 3.2;
  stroke-linecap: round;
}
.icons svg .solid {
  fill: #363636;
  stroke-width: 1;
}
.icons svg .gear {
  stroke-width: 3;
}
.icons svg text {
  fill: #363636;
  stroke: none;
  font-family: 'Liberation Sans', Arial, sans-serif;
  font-size: 22px;
  font-weight: bold;
  text-anchor: middle;
}
.icons figcaption {
  margin-top: 20px;
  font-family: Lato, sans-serif;
  font-size: 16px;
  font-weight: bold;
  line-height: 24px;
}
.preview-info {
  height: 61px;
  display: flex;
  justify-content: space-between;
  padding: 12px 5px 0 6px;
  font-size: 9px;
  font-weight: 600;
  line-height: 12px;
  color: #e6e6e6;
}

/* settings column */
.settings {
  width: 314px;
  padding: 10px 15px 0 11px;
  font-size: 9px;
  font-weight: 600;
  line-height: 14px;
  color: #c0c0c0;
}
.settings fieldset {
  margin: 0;
  min-width: 0;
  border: 1px solid #494949;
  border-radius: 2px;
}
.settings legend {
  margin-left: -3px;
  padding: 0 3px;
  line-height: 16px;
}
.settings .preset {
  height: 201px;
  padding: 4px 0 0 9px;
}
.row {
  display: flex;
  align-items: center;
  height: 21px;
  margin-bottom: 5px;
}
.row > label {
  color: #b8b8b8;
}
.select {
  position: relative;
  display: block;
  flex: none;
  height: 21px;
  color: #fff;
}
.select select {
  appearance: none;
  width: 100%;
  height: 21px;
  padding-left: 6px;
  border: 1px solid #616161;
  border-radius: 2px;
  background-color: #464646;
  opacity: 1;
}
.select svg {
  position: absolute;
  right: 5px;
  top: 8px;
  pointer-events: none;
}
.select svg,
.spin svg {
  fill: none;
  stroke: #fff;
  stroke-width: 1.5;
  overflow: visible;
}
.w-name {
  width: 139px;
  margin-left: 4px;
}
.w-half {
  width: 85px;
}
.w-art {
  width: 106px;
}
.w-export {
  width: 103px;
}
.list-icon {
  margin-left: 12px;
}
.lab {
  width: 53px;
  margin-right: 4px;
  text-align: right;
}
.row > .check {
  display: flex;
  align-items: center;
  color: #fff;
}
.check input {
  appearance: none;
  flex: none;
  width: 12px;
  height: 12px;
  margin: 0 5px 0 1px;
  border: 1px solid #c8c8c8;
  border-radius: 1px;
}
.check input:checked {
  background-color: #c0c0c0;
}
.check input:checked::after {
  content: '';
  display: block;
  width: 3px;
  height: 6px;
  margin: 0 0 0 3px;
  border: solid #333;
  border-width: 0 2px 2px 0;
  transform: rotate(40deg);
}
.spin {
  display: flex;
  height: 21px;
  border: 1px solid #616161;
  border-radius: 2px;
  color: #fff;
  background-color: #464646;
}
.spin input {
  padding-left: 3px;
}
.spin button {
  width: 18px;
  display: flex;
  align-items: center;
  justify-content: center;
  border-left: 1px solid #616161;
}
.w-45 {
  width: 44px;
}
.w-38 {
  width: 37px;
}
.matte-color {
  width: 15px;
  height: 15px;
  margin-left: 3px;
  background-color: #fff;
}
.settings .image-size {
  height: 144px;
  margin-top: 7px;
  padding: 5px 15px 0 9px;
}
.dims {
  display: flex;
  align-items: flex-start;
}
.dim-fields {
  width: 124px;
}
.dim-head {
  height: 19px;
  padding-left: 45px;
}
.dim-fields .row > label {
  width: 41px;
  margin-right: 4px;
  text-align: right;
}
.dim-fields input {
  width: 59px;
  height: 21px;
  margin-right: 3px;
  padding-left: 4px;
  border: 1px solid #616161;
  border-radius: 2px;
  background-color: #424242;
  color: #fff;
}
.link {
  width: 24px;
  height: 24px;
  margin-top: 30px;
  padding: 3px 7px;
  border-radius: 2px;
  background-color: #2b2b2b;
}
.orig {
  margin-left: auto;
}
.orig div {
  height: 26px;
}
.orig div:first-child {
  height: 21px;
}
.orig span {
  display: inline-block;
  width: 20px;
}
.resample {
  padding-left: 5px;
  justify-content: space-between;
}
.table-head {
  display: flex;
  justify-content: space-between;
  height: 28px;
  padding: 9px 6px 0 0;
}
.color-table {
  height: 158px;
  border: 1px solid #616161;
}
.table-tools {
  margin: 7px 8px 10px auto;
}
.export {
  display: flex;
  align-items: center;
  gap: 5px;
  color: #777;
}
.off {
  color: #7c7c7c;
}
.off select {
  border-color: #595959;
  background-color: #595959;
}
.off svg {
  stroke: #7c7c7c;
}

/* dialog bottom */
.info-row {
  height: 21px;
  margin: 9px 313px 10px 45px;
  display: flex;
  align-items: center;
}
.zoom {
  width: 77px;
  height: 21px;
  border: 1px solid #616161;
  border-radius: 2px;
}
.zoom input {
  height: 19px;
  border-right: 1px solid #616161;
}
.readout {
  display: flex;
  margin-left: 22px;
  font-size: 9px;
  font-weight: 600;
}
.readout span {
  width: 36px;
  white-space: nowrap;
}
.readout .wide {
  width: 56px;
}
.readout .wider {
  width: 67px;
}
.dither {
  margin-left: auto;
  display: flex;
  align-items: center;
  color: #fff;
  font-size: 11px;
}
.button-row {
  display: flex;
  align-items: center;
  gap: 5px;
  margin: 0 10px 25px 45px;
}
.pill {
  width: 92px;
  height: 26px;
  border: 1px solid #fff;
  border-radius: 13px;
  color: #fff;
  font-size: 12px;
}
.save {
  border-color: #469ff5;
  background-color: #469ff5;
}
.globe {
  margin-left: 6px;
}
.spacer {
  flex: 1;
}
.resize {
  position: absolute;
  right: 0;
  bottom: 0;
}
```
